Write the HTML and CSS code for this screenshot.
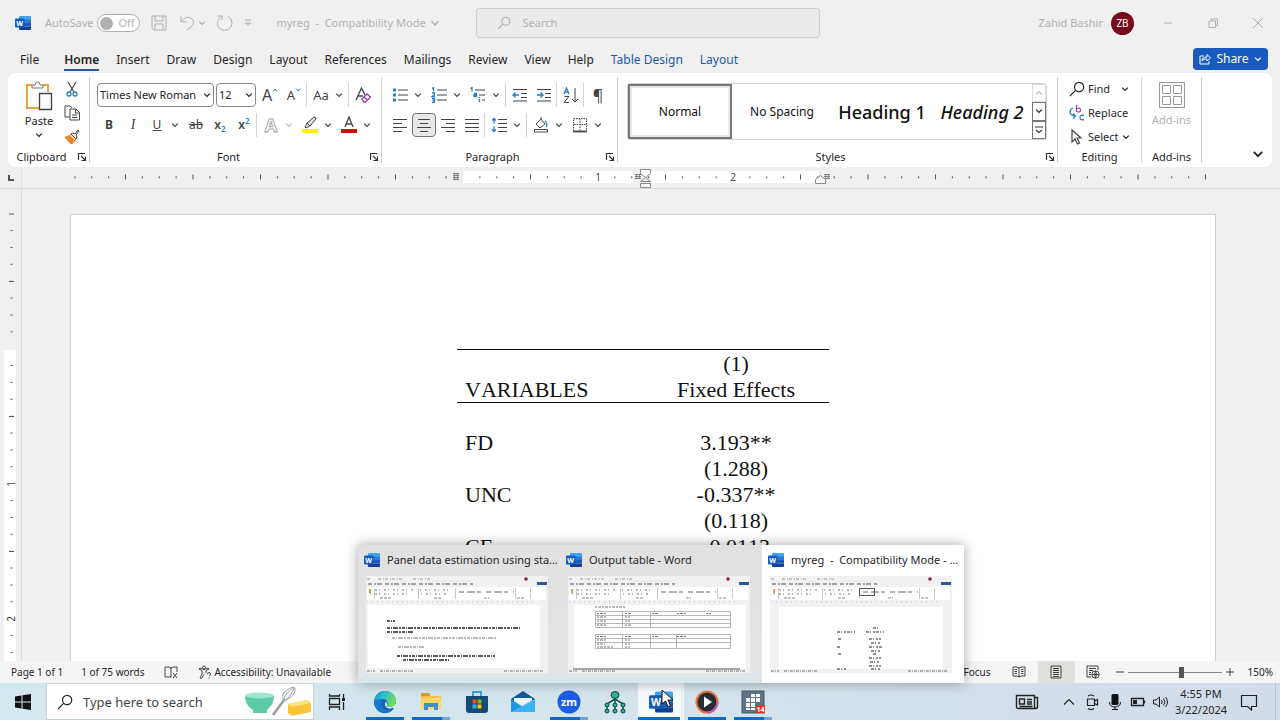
FILE: index.html
```html
<!DOCTYPE html>
<html lang="en">

<head>
  <meta charset="UTF-8" />
  <meta name="viewport" content="width=device-width, initial-scale=1.0" />
  <title>myreg - Compatibility Mode - Word</title>
  <link rel="stylesheet" href="styles.css">
</head>

<body>

  <!-- Shared icons -->
  <svg class="defs" aria-hidden="true">
    <symbol id="chev" viewBox="0 0 8 8"><path d="M1.2 2.6 4 5.4 6.8 2.6" fill="none" stroke="currentColor" stroke-width="1.3" /></symbol>
    <symbol id="launcher" viewBox="0 0 10 10"><path d="M1.5 8V1.5H8M4 4l4 4M8.5 4.5v4h-4" fill="none" stroke="#333" stroke-width="1.1" /></symbol>
    <symbol id="word" viewBox="0 0 16 16">
      <path d="M5 1h10q1 0 1 1v3H4V2q0-1 1-1z" fill="#41a5ee" />
      <path d="M4 4.500h12V8H4z" fill="#2b7cd3" />
      <path d="M4 8h12v3.500H4z" fill="#185abd" />
      <path d="M4 11.500h12V14q0 1-1 1H5q-1 0-1-1z" fill="#103f91" />
      <rect x="0" y="3.500" width="9.500" height="9" rx="1" fill="#185abd" />
      <text x="4.700" y="10.800" text-anchor="middle" class="word-letter">W</text>
    </symbol>
    <symbol id="magnifier" viewBox="0 0 16 16"><path d="M6.300 9.700 1 15M5.500 6a4.600 4.600 0 1 1 9.200 0 4.600 4.600 0 0 1-9.200 0z" fill="none" stroke="currentColor" stroke-width="1.2" /></symbol>
    <symbol id="thumb-chrome" viewBox="0 0 182 97">
      <rect width="182" height="97" fill="#f1f1f1" />
      <rect x="1" y="11" width="179" height="13" fill="#fff" />
      <path d="M1 3h4M12 3h26M47 3h18" stroke="#999" stroke-dasharray="3 2 1 1" />
      <circle cx="160" cy="3" r="1.800" fill="#8a2740" />
      <rect x="171" y="6" width="10" height="3" fill="#2a5a9d" />
      <path d="M2 8h105" stroke="#555" stroke-dasharray="4 2 2 1 5 3" />
      <path d="M4 14h44M54 14h29M4 18h41M55 18h26" stroke="#777" stroke-dasharray="1 4 2 2" />
      <rect x="3" y="13" width="2" height="4" fill="#e09a45" />
      <path d="M93 16h55" stroke="#666" stroke-dasharray="5 3 8 2 4 5" />
      <path d="M8.500 12v11M52.500 12v11M89.500 12v11M149.500 12v11M164.500 12v11" stroke="#ccc" />
      <path d="M14 22h12M68 22h8M118 22h5M151 22h8" stroke="#888" stroke-dasharray="3 1" />
      <path d="M1 26h170" stroke="#bbb" stroke-dasharray="1 4" />
      <path d="M1 95h8M14 95h34M138 95h40" stroke="#777" stroke-dasharray="3 1 1 1" />
    </symbol>
  </svg>

  <header class="titlebar">
    <div class="title-left">
      <svg class="i16" viewBox="0 0 16 16"><use href="#word" /></svg>
      <label for="autosave">AutoSave</label>
      <span class="toggle"><input type="checkbox" id="autosave"><span>Off</span></span>
      <button class="quick" aria-label="Save"><svg class="i18" viewBox="0 0 18 18"><path d="M2 2h14v14H4l-2-2zM5 2v5h8V2M5 16v-6h8v6" /></svg></button>
      <button class="quick undo" aria-label="Undo"><svg class="i18" viewBox="0 0 18 18"><path d="M3 2v6h6M3 8c3-5 8-6 11-3 3 3 1 6-1 8l-4 3" /></svg><svg class="i8"><use href="#chev" /></svg></button>
      <button class="quick" aria-label="Redo"><svg class="i18" viewBox="0 0 18 18"><path d="M6 2H1.500M6 2v4M5.500 2.500C0 6 0 13 5 15.500c5 2.500 11-1 11-6.500 0-3-1.500-5-4-6.500" /></svg></button>
      <button class="quick" aria-label="Customize"><svg class="i8" viewBox="0 0 8 8"><path d="M1 1h6M1.500 4h5L4 6.500z" /></svg></button>
      <button class="doc-name">myreg &nbsp;- &nbsp;Compatibility Mode <svg class="i10"><use href="#chev" /></svg></button>
    </div>
    <label class="search">
      <svg class="i14"><use href="#magnifier" /></svg>
      <input type="search" placeholder="Search" aria-label="Search">
    </label>
    <div class="title-right">
      <span class="user">Zahid Bashir</span>
      <span class="avatar">ZB</span>
      <button class="win" aria-label="Minimize"><svg class="i12" viewBox="0 0 12 12"><path d="M2 6h8" /></svg></button>
      <button class="win" aria-label="Restore"><svg class="i12" viewBox="0 0 12 12"><path d="M2 4h6.500v6.500H2zM4 4V2h6.500v6.500h-2" /></svg></button>
      <button class="win" aria-label="Close"><svg class="i12" viewBox="0 0 12 12"><path d="M1 1l10 10M11 1 1 11" /></svg></button>
    </div>
  </header>

  <nav class="tabs">
    <a href="#">File</a>
    <a href="#" class="active">Home</a>
    <a href="#">Insert</a>
    <a href="#">Draw</a>
    <a href="#">Design</a>
    <a href="#">Layout</a>
    <a href="#">References</a>
    <a href="#">Mailings</a>
    <a href="#">Review</a>
    <a href="#">View</a>
    <a href="#">Help</a>
    <a href="#" class="context">Table Design</a>
    <a href="#" class="context">Layout</a>
    <button class="share">
      <svg class="i12" viewBox="0 0 12 12"><path d="M5 3H1v8h9V8M3 8c0-3 2-4 5-4V1.500L11.500 5 8 8V6C6 6 4 6 3 8z" /></svg>
      Share
      <svg class="i8"><use href="#chev" /></svg>
    </button>
  </nav>

  <main class="ribbon">
    <section class="group clipboard">
      <div class="group-body">
        <button class="paste">
          <svg width="28" height="30" viewBox="0 0 28 30">
            <path d="M7 4H2v23h13M18 4h5v7" fill="none" stroke="#e8a33d" stroke-width="2" />
            <path d="M7 7V4h3q0-3 2.500-3T15 4h3v3z" fill="#fff" stroke="#777" />
            <path d="M14.500 12.500h12v16h-12z" fill="#fafafa" stroke="#444" stroke-width="1.300" />
          </svg>
          <span>Paste</span>
          <svg class="i8"><use href="#chev" /></svg>
        </button>
        <div class="stack">
          <button class="tool" aria-label="Cut"><svg class="i16" viewBox="0 0 16 16"><path d="M4 1l6 10M12 1 6 11" fill="none" stroke="#444" stroke-width="1.200" /><g fill="none" stroke="#2b7fc3" stroke-width="1.300"><circle cx="5" cy="13" r="2" /><circle cx="11" cy="13" r="2" /></g></svg></button>
          <button class="tool" aria-label="Copy"><svg class="i16" viewBox="0 0 16 16"><path d="M6 12H1V1h5l2 2M6 4h6l3.500 3.500V15H6zM11.500 4v4h4M8 10h5M8 12.500h5" fill="none" stroke="#444" /></svg></button>
          <button class="tool" aria-label="Format Painter"><svg class="i16" viewBox="0 0 16 16"><path d="M1 8c3 0 4-1 6-3l5 5c-2 3-3 4-5 5z" fill="#fbd9a4" stroke="#d9771f" /><path d="M1 9l7 6 3-4-6-5z" fill="#e8862b" /><path d="M7 5l2-1 2 1 3-4 1 1-3 4 1 2-1 2z" fill="#fff" stroke="#444" /></svg></button>
        </div>
      </div>
      <div class="group-label"><span>Clipboard</span><button class="launch" aria-label="Clipboard options"><svg class="i10"><use href="#launcher" /></svg></button></div>
    </section>

    <section class="group font">
      <div class="group-body rows">
        <div class="row">
          <span class="combo combo-name"><select aria-label="Font"><option>Times New Roman</option></select><svg class="i8"><use href="#chev" /></svg></span>
          <span class="combo combo-size"><select aria-label="Font size"><option>12</option></select><svg class="i8"><use href="#chev" /></svg></span>
          <button class="tool big" aria-label="Grow font">A<svg class="i6 blue" viewBox="0 0 6 6"><path d="M1 4.500 3 2l2 2.500" /></svg></button>
          <button class="tool mid" aria-label="Shrink font">A<svg class="i6 blue" viewBox="0 0 6 6"><path d="M1 1.500 3 4l2-2.500" /></svg></button>
          <span class="sep"></span>
          <span class="split"><button class="tool mid">Aa</button><button class="drop" aria-label="Case"><svg class="i8"><use href="#chev" /></svg></button></span>
          <span class="sep"></span>
          <button class="tool" aria-label="Clear formatting"><svg class="i18" viewBox="0 0 18 18"><path d="M2 14 7.500 2 11 9M4 10h5" fill="none" stroke="#444" stroke-width="1.300" /><path d="M8 13l5-5 3.500 3-5 5H10z M10 11l3.500 3" fill="#fff" stroke="#9b3fb5" stroke-width="1.300" /></svg></button>
        </div>
        <div class="row">
          <button class="tool bold">B</button>
          <button class="tool italic">I</button>
          <span class="split"><button class="tool under">U</button><button class="drop" aria-label="Underline style"><svg class="i8"><use href="#chev" /></svg></button></span>
          <button class="tool strike">ab</button>
          <button class="tool semi">x<sub>2</sub></button>
          <button class="tool semi">x<sup>2</sup></button>
          <span class="sep"></span>
          <span class="split off"><button class="tool outline">A</button><button class="drop" aria-label="Text effects"><svg class="i8"><use href="#chev" /></svg></button></span>
          <span class="split"><button class="tool" aria-label="Highlight"><svg class="i18" viewBox="0 0 18 18"><path d="M4 11l2-4 7-6q2 0 2 2l-6 7-4 2z" fill="#ddd" stroke="#444" /><path d="M6 7l3 3" stroke="#444" /><rect x="1" y="13" width="16" height="4" fill="#fff200" /></svg></button><button class="drop" aria-label="Highlight color"><svg class="i8"><use href="#chev" /></svg></button></span>
          <span class="split"><button class="tool" aria-label="Font color"><svg class="i18" viewBox="0 0 18 18"><path d="M5 11 9 1l4 10M6.500 8h5" fill="none" stroke="#444" stroke-width="1.300" /><rect x="1" y="13" width="16" height="4" fill="#d01010" /></svg></button><button class="drop" aria-label="More font colors"><svg class="i8"><use href="#chev" /></svg></button></span>
        </div>
      </div>
      <div class="group-label"><span>Font</span><button class="launch" aria-label="Font options"><svg class="i10"><use href="#launcher" /></svg></button></div>
    </section>

    <section class="group paragraph">
      <div class="group-body rows">
        <div class="row">
          <span class="split"><button class="tool" aria-label="Bullets"><svg class="i16 line" viewBox="0 0 16 16"><path d="M6 3h10M6 8h10M6 13h10" /><path class="fill" d="M1 1.500h3v3H1zM1 6.500h3v3H1zM1 11.500h3v3H1z" /></svg></button><button class="drop" aria-label="Bullet styles"><svg class="i8"><use href="#chev" /></svg></button></span>
          <span class="split"><button class="tool" aria-label="Numbering"><svg class="i16 line" viewBox="0 0 16 16"><path d="M6 3h10M6 8h10M6 13h10" /><path class="blue" d="M1 1.500l1.500-1v4M1 6h2.500v2L1 9.500h3M1 11.500h2.500v4H1M1.500 13.500h2" /></svg></button><button class="drop" aria-label="Number styles"><svg class="i8"><use href="#chev" /></svg></button></span>
          <span class="split"><button class="tool" aria-label="Multilevel list"><svg class="i16 line" viewBox="0 0 16 16"><path d="M5 3h10M9 8h6M12 13h3" /><path class="blue" d="M.5 1.500l1.500-1v4M4 6.500h2.500v3H4V8h2.500M9.500 12v3M9.500 10v1" /></svg></button><button class="drop" aria-label="List styles"><svg class="i8"><use href="#chev" /></svg></button></span>
          <span class="sep"></span>
          <button class="tool" aria-label="Decrease indent"><svg class="i16 line" viewBox="0 0 16 16"><path d="M1 2.500h14M9 6.500h6M9 10.500h6M1 14h14" /><path class="blue" d="M7 8H1M3.500 5.500 1 8l2.500 2.500" /></svg></button>
          <button class="tool" aria-label="Increase indent"><svg class="i16 line" viewBox="0 0 16 16"><path d="M1 2.500h14M9 6.500h6M9 10.500h6M1 14h14" /><path class="blue" d="M1 8h6M4.500 5.500 7 8l-2.500 2.500" /></svg></button>
          <span class="sep"></span>
          <button class="tool" aria-label="Sort"><svg class="i16 line" viewBox="0 0 16 16"><path class="blue" d="M1 7 3.500 1 6 7M2 5h3" /><path d="M1.500 9.500H6l-5 6h5M12 1v14M9 12l3 3 3-3" /></svg></button>
          <span class="sep"></span>
          <button class="tool mark">¶</button>
        </div>
        <div class="row">
          <button class="tool" aria-label="Align left"><svg class="i16 line" viewBox="0 0 16 16"><path d="M1 2.500h14M1 6.500h9M1 10.500h14M1 14.500h9" /></svg></button>
          <button class="tool on" aria-label="Center"><svg class="i16 line" viewBox="0 0 16 16"><path d="M2 2.500h12M4 6.500h8M1 10.500h14M4 14.500h8" /></svg></button>
          <button class="tool" aria-label="Align right"><svg class="i16 line" viewBox="0 0 16 16"><path d="M1 2.500h14M6 6.500h9M1 10.500h14M6 14.500h9" /></svg></button>
          <button class="tool" aria-label="Justify"><svg class="i16 line" viewBox="0 0 16 16"><path d="M1 2.500h14M1 6.500h14M1 10.500h14M1 14.500h14" /></svg></button>
          <span class="sep"></span>
          <span class="split"><button class="tool" aria-label="Line spacing"><svg class="i16 line" viewBox="0 0 16 16"><path d="M7 2.500h9M7 6.500h9M7 10.500h9M7 14.500h9" /><path class="blue" d="M3 1.500v5M1 3.500l2-2 2 2M3 9.500v5M1 12.500l2 2 2-2" /></svg></button><button class="drop" aria-label="Spacing options"><svg class="i8"><use href="#chev" /></svg></button></span>
          <span class="sep"></span>
          <span class="split"><button class="tool" aria-label="Shading"><svg class="i16 line" viewBox="0 0 16 16"><path d="M3 7l5-5 4 5-5 4zM8 2V0" /><path class="blue" d="M12 4q2.500 2 1.500 6" /><path d="M1.500 12.500h13v2.500h-13z" stroke="#999" /></svg></button><button class="drop" aria-label="Shading color"><svg class="i8"><use href="#chev" /></svg></button></span>
          <span class="split"><button class="tool" aria-label="Borders"><svg class="i16 line" viewBox="0 0 16 16"><path d="M1.500 14V1.500h13V14M8 2v12M2 7.500h12" stroke-dasharray="1.500 1" /><path d="M1 14.500h14" stroke-width="1.800" /></svg></button><button class="drop" aria-label="Border styles"><svg class="i8"><use href="#chev" /></svg></button></span>
        </div>
      </div>
      <div class="group-label"><span>Paragraph</span><button class="launch" aria-label="Paragraph options"><svg class="i10"><use href="#launcher" /></svg></button></div>
    </section>

    <section class="group styles">
      <div class="group-body">
        <div class="gallery">
          <button class="style selected">Normal</button>
          <button class="style">No Spacing</button>
          <button class="style h1">Heading 1</button>
          <button class="style h2">Heading 2</button>
          <div class="gallery-nav">
            <button class="up" aria-label="Previous styles"><svg class="i8"><use href="#chev" /></svg></button>
            <button aria-label="Next styles"><svg class="i8"><use href="#chev" /></svg></button>
            <button aria-label="All styles"><svg class="i8" viewBox="0 0 8 8"><path d="M0 1h8M1 4l3 2.500L7 4" fill="none" stroke="#333" stroke-width="1.200" /></svg></button>
          </div>
        </div>
      </div>
      <div class="group-label"><span>Styles</span><button class="launch" aria-label="Styles options"><svg class="i10"><use href="#launcher" /></svg></button></div>
    </section>

    <section class="group editing">
      <div class="group-body">
        <button class="edit"><svg class="i16"><use href="#magnifier" /></svg><span class="find">Find</span><svg class="i8"><use href="#chev" /></svg></button>
        <button class="edit"><svg class="i16" viewBox="0 0 16 16"><path d="M4 3Q1 4 1 7t5 4M4 8.500 6.500 11 4 13.500" fill="none" stroke="#2b7fc3" stroke-width="1.300" /><path d="M7.500 0v7M7.500 4q4-2 4 1t-4 1.500" fill="none" stroke="#9b3fb5" stroke-width="1.200" /><path d="M15 10.500q-4-1-4 2t4 2" fill="none" stroke="#2b7fc3" stroke-width="1.300" /></svg><span>Replace</span></button>
        <button class="edit"><svg class="i16" viewBox="0 0 16 16"><path d="M3 1v12l3-3 2.500 5 2-1L8 9h4z" fill="#fff" stroke="#444" stroke-width="1.200" /></svg><span>Select</span><svg class="i8"><use href="#chev" /></svg></button>
      </div>
      <div class="group-label"><span>Editing</span></div>
    </section>

    <section class="group addins">
      <div class="group-body">
        <button class="addin">
          <svg width="28" height="28" viewBox="0 0 28 28"><path d="M1.500 1.500h25v25h-25zM4.500 4.500h8v8h-8zM15.500 4.500h8v8h-8zM4.500 15.500h8v8h-8zM15.500 15.500h8v8h-8z" fill="none" stroke="#9a9a9a" /></svg>
          <span>Add-ins</span>
        </button>
      </div>
      <div class="group-label"><span>Add-ins</span></div>
    </section>

    <button class="collapse" aria-label="Collapse the ribbon"><svg class="i12"><use href="#chev" /></svg></button>
  </main>

  <div class="hruler">
    <div class="corner"><svg class="i8" viewBox="0 0 8 8"><path d="M2 1v5h5" fill="none" stroke="#555" stroke-width="2" /></svg></div>
    <div class="hruler-track">
      <svg width="1146" height="21" viewBox="70 167 1146 21">
        <defs>
          <pattern id="inch" x="462.500" y="167" width="67.500" height="21" patternUnits="userSpaceOnUse">
            <path d="M.5 7.500v5" stroke="#555" stroke-width="1" />
            <path d="M17.400 9.200v2M34.200 9.200v2M51.100 9.200v2" stroke="#555" stroke-width="1" />
          </pattern>
        </defs>
        <rect x="463" y="171" width="170" height="12" fill="#fff" />
        <rect x="651" y="171" width="168" height="12" fill="#fff" />
        <rect x="74" y="167" width="1133" height="21" fill="url(#inch)" />
        <rect x="455" y="170" width="16" height="13" fill="#f0f0f0" />
        <rect x="463" y="171" width="8" height="12" fill="#fff" />
        <rect x="592" y="171" width="12" height="12" fill="#fff" />
        <rect x="727" y="171" width="12" height="12" fill="#fff" />
        <text x="598" y="181" class="tick-label">1</text>
        <text x="733" y="181" class="tick-label">2</text>
        <path d="M453 173.500h6M453 175.500h6M453 177.500h6M453 179.500h6M635 174.500h6M635 176.500h6M635 178.500h6M824 174.500h6M824 176.500h6M824 178.500h6" stroke="#777" />
        <path d="M454.500 173v7M457.500 173v7M636.500 174v5M639.500 174v5M825.500 174v5M828.500 174v5" stroke="#888" />
        <path d="M640.500 169.500h10v4l-5 4-5-4zM640.500 181.500l5-4 5 4zM640.500 183.500h10v4h-10z" fill="#fafafa" stroke="#888" />
        <path d="M815.500 183.500v-4l5-4 5 4v4z" fill="#fafafa" stroke="#888" />
      </svg>
    </div>
  </div>

  <div class="workspace">
    <div class="vruler">
      <svg width="22" height="472" viewBox="0 189 22 472">
        <rect x="4" y="350" width="12" height="311" fill="#fff" />
        <path d="M11.500 230v435" stroke="#555" stroke-width="2" stroke-dasharray="1 15.875" />
        <path d="M9 214h5M9 281.500h5M9 416.500h5M9 551.500h5" stroke="#555" />
        <rect x="4" y="340" width="13" height="10" fill="#f0f0f0" />
        <rect x="4" y="478" width="12" height="12" fill="#fff" />
        <rect x="4" y="613" width="12" height="12" fill="#fff" />
        <text transform="translate(15 484) rotate(-90)" class="tick-label">1</text>
        <text transform="translate(15 619) rotate(-90)" class="tick-label">2</text>
      </svg>
    </div>
    <div class="canvas">
      <article class="page">
        <table class="reg">
          <thead>
            <tr><th></th><th>(1)</th></tr>
            <tr><th>VARIABLES</th><th>Fixed Effects</th></tr>
          </thead>
          <tbody>
            <tr><td></td><td></td></tr>
            <tr><td>FD</td><td>3.193**</td></tr>
            <tr><td></td><td>(1.288)</td></tr>
            <tr><td>UNC</td><td>-0.337**</td></tr>
            <tr><td></td><td>(0.118)</td></tr>
            <tr><td>CF</td><td>-0.0113</td></tr>
          </tbody>
        </table>
      </article>
    </div>
  </div>

  <footer class="status">
    <span>Page 1 of 1</span>
    <span>1 of 75 words</span>
    <button class="proof" aria-label="Proofing"><svg class="i14 line" viewBox="0 0 14 14"><path d="M7 12H1V2h4q2 0 2 2v8M7 4q0-2 2-2h4v5M9 8l4 5M13 8l-4 5" /></svg></button>
    <button class="access"><svg class="i14 line" viewBox="0 0 14 14"><circle cx="6" cy="2.500" r="1.500" /><path d="M1 4l3 1.500V9L2 13l1.500.5L6 9.500M11 4 8 5.500V8M1 4l1-1 4 1.500L10 3l1 1M9.500 9q0-1.500 1.500-1.500T12.500 9 11 11M11 12.500v1" /></svg>Accessibility: Unavailable</button>
    <div class="status-right">
      <button class="focus">Focus</button>
      <button class="view" aria-label="Read mode"><svg class="i14 line" viewBox="0 0 14 14"><path d="M7 3v9M7 3 5 2H1v9h4l2 1 2-1h4V2H9zM2.500 4.500H5M2.500 6.500H5M2.500 8.500H5M9 4.500h2.500M9 6.500h2.500M9 8.500h2.500" /></svg></button>
      <button class="view on" aria-label="Print layout"><svg class="i14 line" viewBox="0 0 14 14"><path d="M2 1h10v12H2zM4 3.500h6M4 5.500h6M4 7.500h6M4 9.500h6M4 11.500h6" /></svg></button>
      <button class="view" aria-label="Web layout"><svg class="i14 line" viewBox="0 0 14 14"><path d="M12 5V1H1v11h4M3 3.500h7M3 5.500h4M3 7.500h2M3 9.500h2" /><circle cx="9.500" cy="9.500" r="3.700" /><path d="M6 9.500h7M9.500 6q-2 3.500 0 7M9.500 6q2 3.500 0 7" /></svg></button>
      <button class="zoom-step" aria-label="Zoom out"><svg class="i8" viewBox="0 0 8 8"><path d="M0 4h8" /></svg></button>
      <input type="range" min="0" max="100" value="58" aria-label="Zoom">
      <button class="zoom-step" aria-label="Zoom in"><svg class="i8" viewBox="0 0 8 8"><path d="M0 4h8M4 0v8" /></svg></button>
      <span class="zoom-value">150%</span>
    </div>
  </footer>

  <div class="taskbar">
    <button class="task start" aria-label="Start"><svg class="i16" viewBox="0 0 16 16"><path d="M0 2.500 6.500 1.500v6H0zM7.500 1.300 16 0v7.500H7.500zM0 8.500h6.500v6L0 13.500zM7.500 8.500H16V16l-8.500-1.300z" fill="#111" /></svg></button>
    <label class="task-search">
      <svg class="i16"><use href="#magnifier" /></svg>
      <input type="search" placeholder="Type here to search" aria-label="Type here to search">
      <svg class="food" width="70" height="32" viewBox="0 0 70 32">
        <path d="M3 10h29q0 8-7 14v3H11v-3Q3 19 3 10z" fill="#5cc9a7" />
        <ellipse cx="17.500" cy="9.500" rx="14.500" ry="3" fill="#9ae8cf" />
        <path d="M31 29 42 14" stroke="#99a" stroke-width="2.500" />
        <path d="M42 15q-4-7 3-11 6-4 8-2 1 8-11 13zM42 15q0-8 10-13M42 15q6-3 10-12" fill="none" stroke="#9aa0aa" stroke-width="1" />
        <path d="M46 18 65 14l4 3v9l-19 4-4-3z" fill="#f9c63a" />
        <path d="M46 18 65 14l4 3-19 4z" fill="#ffe27a" />
      </svg>
    </label>
    <button class="task" aria-label="Task view"><svg class="i18" viewBox="0 0 18 18"><path d="M1.500 5.500h10v6h-10zM1.500 1v2h10V1M1.500 17v-3h10v3M15.500 1v4M15.500 9v8" fill="none" stroke="#222" stroke-width="1.300" /><rect x="14" y="5" width="3" height="3" fill="#222" /></svg></button>

    <div class="apps">
      <button class="task open" aria-label="Edge"><svg class="i24" viewBox="0 0 24 24">
        <defs>
          <linearGradient id="edge" x1="0" y1="0" x2="1" y2=".4"><stop offset="0" stop-color="#1b8fd6" /><stop offset=".5" stop-color="#30c1cf" /><stop offset="1" stop-color="#6fdc5b" /></linearGradient>
        </defs>
        <circle cx="12" cy="12" r="11" fill="#1565b8" />
        <path d="M1 12C2 4 7 1 12 1c7 0 11 5 11 10 0 4-3 6-6 6-3 0-4-1-3-2s1-6-4-6c-4 0-8 1-9 3z" fill="url(#edge)" />
        <path d="M14 15c-1 1 0 2 3 2 2 0 4-1 5.500-3l1.500 0-1 5-3-1c-4 1.500-9-.5-8-5 .5-2 2-1 2 2z" fill="#d5e7ee" />
        <path d="M8 12c-1 6 4 10 12 7.500C14 26 2 24 1 12c1-3 6-3 9-3-1 1-2 2-2 3z" fill="#1c78cd" />
      </svg></button>
      <button class="task open multi" aria-label="File Explorer"><svg class="i24" viewBox="0 0 24 24"><path d="M2 3h8l2 3h10v13H2z" fill="#f6c344" /><path d="M2 3h8l1 3H2z" fill="#d99a1e" /><path d="M2 8h20v11H2z" fill="#ffd566" /><path d="M5 20v-7h14v7h-4v-3H9v3z" fill="#3f8fd0" /></svg></button>
      <button class="task" aria-label="Microsoft Store"><svg class="i24" viewBox="0 0 24 24"><path d="M8 6V2h8v4" fill="none" stroke="#35a5dd" stroke-width="2" /><path d="M1 6h22v14q0 3-3 3H4q-3 0-3-3z" fill="#164a77" /><path d="M7.500 9.500h4v4h-4z" fill="#f25022" /><path d="M12.500 9.500h4v4h-4z" fill="#7fba00" /><path d="M7.500 14.500h4v4h-4z" fill="#33a9e8" /><path d="M12.500 14.500h4v4h-4z" fill="#ffb900" /></svg></button>
      <button class="task" aria-label="Mail"><svg class="i24" viewBox="0 0 24 24"><path d="M0 9 12 1l12 8v13H0z" fill="#0f5a9c" /><path d="M3 8h18v9H3z" fill="#eef6fb" /><path d="M0 9l12 8 12-8v13H0z" fill="#1f95dd" /><path d="M0 22 24 9v13z" fill="#3ab5f2" /></svg></button>
      <button class="task open multi" aria-label="Zoom"><svg class="i24" viewBox="0 0 24 24"><circle cx="12" cy="12" r="11.500" fill="#1b5fe0" /><text x="12" y="16" text-anchor="middle" class="zm">zm</text></svg></button>
      <button class="task" aria-label="Network"><svg class="i24" viewBox="0 0 24 24"><path d="M12 6v17M12 9 4 14v9M12 9l8 5v9" fill="none" stroke="#155" stroke-width="1.500" /><g fill="#27b58e" stroke="#144" stroke-width="1"><ellipse cx="12" cy="5" rx="4" ry="3.500" /><circle cx="4" cy="15" r="2" /><circle cx="12" cy="15" r="2" /><circle cx="20" cy="15" r="2" /><circle cx="4" cy="21" r="2" /><circle cx="12" cy="21" r="2" /><circle cx="20" cy="21" r="2" /></g></svg></button>
      <div class="word-app">
        <button class="task open current" aria-label="Word"><svg class="i24"><use href="#word" /></svg></button>
        <div class="previews">
          <a href="#" class="preview">
            <span class="preview-title"><svg class="i16"><use href="#word" /></svg><span>Panel data estimation using stata - Word</span></span>
            <svg class="thumb" viewBox="0 0 182 97">
              <use href="#thumb-chrome" />
              <rect x="2" y="29" width="172" height="63" fill="#fff" />
              <g stroke="#222" stroke-width="1.600" stroke-dasharray="3 1 1 1 5 1 2 1">
                <path d="M21 45h8M21 52h133M21 56h27M31 80h98M37 84h46" />
                <path d="M26 62h105M32 71h26" stroke="#777" stroke-width="1" />
              </g>
            </svg>
          </a>
          <a href="#" class="preview">
            <span class="preview-title"><svg class="i16"><use href="#word" /></svg><span>Output table - Word</span></span>
            <svg class="thumb" viewBox="0 0 182 97">
              <use href="#thumb-chrome" />
              <rect x="6" y="29" width="172" height="64" fill="#fff" />
              <path d="M27 31h31M29 37.500h10M57 37.500h6M84 37.500h6M109 37.500h10M138 37.500h5M29 41h9M57 41h5M29 45h10M57 45h5M29 49h9M57 49h6M29 60.500h10M57 60.500h6M84 60.500h6M109 60.500h10M29 64h9M57 64h5M29 68h8M57 68h5M29 71h16M57 71h5" stroke="#777" stroke-dasharray="2 1 3 1" />
              <path d="M27.500 35.500h135v16h-135zM27.500 39.500h135M27.500 43.500h135M27.500 47.500h135M27.500 58.500h135v14h-135zM27.500 62.500h135M27.500 66.500h135M54.500 35.500v16M82.500 35.500v16M54.500 58.500v14M82.500 58.500v14M108.500 58.500v14" fill="none" stroke="#999" stroke-width=".7" />
              <path d="M5 93h167" stroke="#555" stroke-width="1.200" />
            </svg>
          </a>
          <a href="#" class="preview hover">
            <span class="preview-title"><svg class="i16"><use href="#word" /></svg><span>myreg &nbsp;- &nbsp;Compatibility Mode - Word</span></span>
            <svg class="thumb" viewBox="0 0 182 97">
              <use href="#thumb-chrome" />
              <rect x="89.500" y="12.500" width="15" height="7" fill="none" stroke="#555" />
              <rect x="9" y="31" width="164" height="62" fill="#fff" />
              <path d="M67 56h18M68 63h3M67 71h4M68 78h3M67 93h10M96 56h18M103 52h5M99 63h12M101 67h9M99 71h13M101 75h9M103 78h3M99 82h12M100 86h9M99 90h12M101 93h10" stroke="#222" stroke-dasharray="3 1 1 2 2 1" />
            </svg>
          </a>
        </div>
        <svg class="pointer" width="13" height="19" viewBox="0 0 13 19"><path d="M1 1v14l3.500-3 2.500 6 2.500-1L7 11h5z" fill="#fff" stroke="#111" /></svg>
      </div>
      <button class="task open" aria-label="Media Player"><svg class="i24" viewBox="0 0 24 24"><circle cx="12" cy="12" r="10.500" fill="#2a2a30" stroke="#e0773f" stroke-width="2" /><path d="M12 22.500A10.500 10.500 0 0 0 22.500 12" fill="none" stroke="#b45cc4" stroke-width="2" /><path d="M9 6.500 17 12l-8 5.500z" fill="#fff" /></svg></button>
      <button class="task open multi" aria-label="Calendar"><svg class="i24" viewBox="0 0 24 24"><rect x="1" y="1" width="22" height="22" fill="#5d7486" stroke="#44586a" /><path d="M5 8h4v4H5zM10 8h4v4h-4zM15 8h4v4h-4zM10 4h4v3h-4zM15 4h4v3h-4zM5 13h4v4H5zM10 13h4v4h-4zM5 18h4v2H5zM10 18h4v2h-4z" fill="#fff" /><rect x="15" y="15" width="9" height="8" fill="#e2322c" /><text x="19.500" y="22" text-anchor="middle" class="badge">14</text></svg></button>
    </div>

    <div class="tray">
      <button class="news" aria-label="News"><svg class="i24" viewBox="0 0 24 24"><path d="M1.500 5.500h18v13h-16q-2 0-2-2zM19.500 7.500h3v9q0 2-2 2h-2M4.500 9h5v5h-5zM12 9.500h5M12 12h5M4.500 16.500h13M12 14h5" fill="none" stroke="#222" stroke-width="1.400" /></svg></button>
      <button aria-label="Hidden icons"><svg class="i16" viewBox="0 0 16 16"><path d="M3 10.500 8 5.500l5 5" fill="none" stroke="#222" stroke-width="1.200" /></svg></button>
      <button aria-label="Meet now"><svg class="i16" viewBox="0 0 16 16"><path d="M3.500 5h7v6.500h-7zM10.500 7l3-1.500v5.500l-3-1.500M4 2q3-2 6 0M4 14.500q3 2 6 0" fill="none" stroke="#222" stroke-width="1.200" /></svg></button>
      <button aria-label="Microphone"><svg class="i16" viewBox="0 0 16 16"><rect x="4.500" y="0" width="7" height="11" rx="1.500" fill="#111" /><path d="M2.500 8q0 5 5.500 5t5.500-5M8 13v2M5 15.500h6" fill="none" stroke="#111" /></svg></button>
      <button aria-label="Battery"><svg class="i16" viewBox="0 0 16 16"><path d="M1.500 4.500h12v7h-12zM14.500 6.500v3" fill="none" stroke="#222" stroke-width="1.300" /><path d="M3 6h4v4H3z" fill="#222" /></svg></button>
      <button aria-label="Volume"><svg class="i16" viewBox="0 0 16 16"><path d="M.5 6v4h2.500l3.500 3V3L3 6zM8.500 6q1.500 2 0 4M10.500 4.500q3 3.500 0 7M12.500 3q4 5 0 10" fill="none" stroke="#222" /></svg></button>
      <div class="clock"><span>4:55 PM</span><span>3/22/2024</span></div>
      <button class="notify" aria-label="Notifications"><svg class="i18" viewBox="0 0 18 18"><path d="M1.500 2.500h15v11h-5v3.500l-4-3.500h-6z" fill="none" stroke="#222" stroke-width="1.200" /></svg></button>
    </div>
  </div>

</body>

</html>
```
FILE: styles.css
```css
* {
  box-sizing: border-box;
}

body {
  margin: 0;
  height: 100vh;
  display: flex;
  flex-direction: column;
  overflow: hidden;
  background-color: #f0f0f0;
  color: #262626;
  font-family: "Noto Sans", sans-serif;
  font-size: 12px;
  line-height: 16px;
}

button,
input,
select {
  font: inherit;
  color: inherit;
  background: none;
  border: none;
  margin: 0;
  padding: 0;
}

button {
  display: flex;
  align-items: center;
  justify-content: center;
  white-space: nowrap;
}

a {
  color: inherit;
  text-decoration: none;
}

svg {
  display: block;
  flex: none;
}

.defs {
  display: none;
}

.i6 { width: 6px; height: 6px; }
.i8 { width: 8px; height: 8px; }
.i10 { width: 10px; height: 10px; }
.i12 { width: 12px; height: 12px; }
.i14 { width: 14px; height: 14px; }
.i16 { width: 16px; height: 16px; }
.i18 { width: 18px; height: 18px; }
.i24 { width: 24px; height: 24px; }

.word-letter {
  font-size: 7px;
  font-weight: bold;
  fill: #fff;
}

/* Title bar */
.titlebar {
  height: 46px;
  flex: none;
  display: grid;
  grid-template-columns: 1fr 344px 1fr;
  align-items: center;
  padding-left: 15px;
  color: #b0b0b0;
}

.titlebar button path {
  fill: none;
  stroke: currentColor;
}

.title-left,
.title-right {
  display: flex;
  align-items: center;
  white-space: nowrap;
  font-size: 11px;
}

.title-left label {
  margin-left: 14px;
}

.toggle {
  display: flex;
  align-items: center;
  gap: 5px;
  width: 43px;
  height: 18px;
  margin: 0 10px 0 4px;
  padding-left: 2px;
  border: 1px solid #b0b0b0;
  border-radius: 9px;
  background-color: #fff;
}

.toggle input {
  appearance: none;
  width: 13px;
  height: 13px;
  border-radius: 50%;
  background-color: #b0b0b0;
}

.quick {
  margin-right: 10px;
}

.undo {
  gap: 2px;
}

.doc-name {
  margin-left: 14px;
  gap: 4px;
}

.search {
  display: flex;
  align-items: center;
  gap: 12px;
  height: 30px;
  padding: 0 20px;
  border: 1px solid #d0d0d0;
  border-radius: 3px;
  background-color: #ebebeb;
}

.search input {
  flex: 1;
  min-width: 0;
  font-size: 11px;
}

.search input::placeholder {
  color: #b0b0b0;
  opacity: 1;
}

.title-right {
  justify-content: flex-end;
}

.avatar {
  width: 23px;
  height: 23px;
  margin: 0 11px 0 8px;
  border-radius: 50%;
  background-color: #750b1c;
  color: #fff;
  font-size: 10px;
  line-height: 23px;
  text-align: center;
}

.win {
  width: 45px;
  height: 30px;
}

/* Tabs */
.tabs {
  display: flex;
  align-items: flex-start;
  gap: 17px;
  height: 27px;
  flex: none;
  padding: 2px 12px 0 20px;
  white-space: nowrap;
}

.tabs a {
  padding: 4px 0 1px;
}

.tabs a:first-child {
  margin-right: 8px;
}

.tabs .active {
  font-weight: 600;
  border-bottom: 2px solid #2b579a;
}

.tabs .context {
  color: #2058a8;
}

.share {
  width: 75px;
  height: 22px;
  margin-left: auto;
  gap: 5px;
  border-radius: 4px;
  background-color: #185abd;
  color: #fff;
}

.share > svg > path {
  fill: none;
  stroke: #fff;
}

/* Ribbon */
.ribbon {
  display: flex;
  height: 94px;
  flex: none;
  margin: 0 8px;
  padding: 4px 0;
  border-radius: 8px;
  background-color: #fff;
}

.group {
  display: flex;
  flex-direction: column;
  flex: none;
  border-right: 1px solid #d4d4d4;
}

.group-body {
  display: flex;
  flex: 1;
}

.group-label {
  display: flex;
  align-items: center;
  height: 13px;
  font-size: 11px;
}

.group-label span {
  flex: 1;
  text-align: center;
}

.launch {
  width: 14px;
}

.clipboard { width: 82px; }
.font { width: 292px; }
.paragraph { width: 236px; }
.styles { width: 440px; }
.editing { width: 84px; }
.addins { width: 60px; }

.paste {
  flex-direction: column;
  justify-content: flex-start;
  width: 54px;
  padding: 4px 0 0 8px;
  gap: 2px;
  font-size: 11px;
}

.stack .tool {
  width: 20px;
}

.rows {
  flex-direction: column;
  gap: 6px;
  padding: 6px 0 0 6px;
}

.font .rows {
  padding-left: 7px;
}

.row {
  display: flex;
  height: 24px;
}

.tool {
  width: 24px;
  height: 24px;
  color: #444;
}

.tool.on {
  border: 1px solid #777;
  border-radius: 4px;
  background-color: #e8e8e8;
}

.split {
  display: flex;
  margin-right: 3px;
}

.drop {
  width: 12px;
  color: #444;
}

.off .drop {
  color: #bbb;
}

.sep {
  width: 3px;
  border-left: 1px solid #d4d4d4;
}

.combo {
  position: relative;
  border: 1px solid #888;
  border-radius: 4px;
  margin-right: 2px;
}

.combo-name { width: 117px; }
.combo-size { width: 40px; }

.combo select {
  appearance: none;
  width: 100%;
  height: 100%;
  padding-left: 2px;
  font-size: 11px;
}

.combo svg {
  position: absolute;
  right: 2px;
  top: 7px;
}

.big { font-size: 16px; }
.mid { font-size: 13px; }
.bold { font-weight: bold; }
.under { text-decoration: underline; }
.strike { text-decoration: line-through; }

.semi {
  display: block;
  font-weight: 600;
}

.tool.italic {
  font-family: "Liberation Serif", serif;
  font-size: 14px;
  font-style: italic;
}

.tool.outline {
  color: #fff;
  font-size: 18px;
  font-weight: bold;
  -webkit-text-stroke: 1px #aaa;
}

.mark {
  font-size: 16px;
}

.big svg,
.mid svg {
  align-self: flex-start;
  margin-top: 4px;
}

sub,
sup {
  font-size: 8px;
  line-height: 8px;
  color: #2b7fc3;
}

.blue path,
.line .blue {
  fill: none;
  stroke: #2b7fc3;
}

.line path,
.line circle {
  fill: none;
  stroke: #444;
}

.line path.blue {
  stroke: #2b7fc3;
  stroke-width: 1.3;
}

.line path.fill {
  fill: #2b7fc3;
  stroke: none;
}

.gallery {
  display: flex;
  width: 420px;
  height: 57px;
  margin: 6px 0 0 9px;
  border: 1px solid #d0d0d0;
  border-radius: 4px;
}

.style {
  flex: 1 1 0;
  min-width: 0;
  color: #111;
}

.style.selected {
  border: 2px solid #777;
  outline: 2px solid #e8e8e8;
  outline-offset: -4px;
}

.h1,
.h2 {
  font-size: 18px;
  font-weight: 500;
}

.h2 {
  font-style: italic;
}

.gallery-nav {
  display: flex;
  flex-direction: column;
  width: 14px;
}

.gallery-nav button {
  flex: 1;
  border: 1px solid #777;
}

.gallery-nav .up {
  border-color: #ddd;
  color: #bbb;
}

.up svg {
  transform: rotate(180deg);
}

.editing .group-body {
  flex-direction: column;
}

.edit {
  justify-content: flex-start;
  height: 24px;
  padding-left: 11px;
  gap: 3px;
  font-size: 11px;
}

.find {
  width: 30px;
  text-align: left;
}

.addin {
  flex: 1;
  flex-direction: column;
  justify-content: flex-start;
  padding-top: 4px;
  gap: 3px;
  color: #b0b0b0;
  font-size: 11px;
}

.collapse {
  margin: auto 8px 3px auto;
}

/* Rulers and document */
.hruler {
  display: flex;
  flex: none;
  height: 22px;
  padding-right: 16px;
  border-bottom: 1px solid #d8d8d8;
}

.corner {
  display: flex;
  justify-content: center;
  align-items: center;
  width: 22px;
  border-right: 1px solid #e0e0e0;
}

.hruler-track {
  display: flex;
  flex: 1;
  justify-content: center;
}

.tick-label {
  font-size: 10px;
  text-anchor: middle;
  fill: #444;
}

.workspace {
  display: flex;
  flex: 1;
  min-height: 0;
  overflow: hidden;
  padding-right: 16px;
}

.vruler {
  width: 22px;
  border-right: 1px solid #dcdcdc;
  overflow: hidden;
}

.canvas {
  flex: 1;
  padding-top: 25px;
}

.page {
  width: 1146px;
  height: 1485px;
  margin: 0 auto;
  padding-top: 134px;
  border: 1px solid #d0d0d0;
  background-color: #fff;
}

.reg {
  width: 372px;
  margin: 0 auto;
  border-collapse: collapse;
  table-layout: fixed;
  color: #111;
  font-family: "Liberation Serif", serif;
  font-size: 22px;
  font-kerning: none;
  line-height: 24px;
}

.reg thead {
  border-top: 1px solid #111;
  border-bottom: 1px solid #111;
}

.reg th,
.reg td {
  height: 26px;
  padding: 2px 0 0;
  font-weight: normal;
  text-align: center;
}

.reg th:first-child,
.reg td:first-child {
  padding-left: 8px;
  text-align: left;
}

/* Status bar */
.status {
  display: flex;
  align-items: center;
  flex: none;
  height: 22px;
  padding: 0 7px 0 11px;
  gap: 18px;
  background-color: #f5f5f5;
  font-size: 10px;
  white-space: nowrap;
}

.proof {
  padding: 0 2px;
}

.access {
  gap: 2px;
}

.status-right {
  display: flex;
  align-items: center;
  margin-left: auto;
  height: 100%;
}

.focus {
  margin-right: 10px;
}

.view {
  width: 37px;
  height: 100%;
}

.view.on {
  background-color: #e0e0dc;
}

.zoom-step {
  margin: 0 4px;
}

.zoom-step path {
  fill: none;
  stroke: #444;
}

.status input {
  appearance: none;
  width: 94px;
  height: 12px;
  background: linear-gradient(#888, #888) center / 100% 1px no-repeat;
}

.status input::-webkit-slider-thumb {
  appearance: none;
  width: 5px;
  height: 11px;
  background-color: #555;
}

.zoom-value {
  margin-left: 10px;
}

/* Taskbar */
.taskbar {
  display: flex;
  flex: none;
  height: 37px;
  background: linear-gradient(90deg, #d2e9ef, #d4e4ec 50%, #d3dbe9);
}

.task {
  position: relative;
  width: 46px;
  height: 37px;
}

.open::after {
  content: "";
  position: absolute;
  left: 4px;
  right: 4px;
  bottom: 0;
  height: 3px;
  background-color: #0a6cc4;
}

.multi::after {
  background: linear-gradient(90deg, #0a6cc4 80%, #6ea6d8 80%);
}

.current {
  background: linear-gradient(90deg, #f6fafc 43px, #dbe6ec 43px, #f1f6f9 44px);
}

.current::after {
  left: 0;
}

.task-search {
  display: flex;
  align-items: center;
  width: 268px;
  padding: 0 1px 0 10px;
  border: 1px solid #c5d3d8;
  background-color: #fff;
}

.task-search input {
  flex: 1;
  min-width: 0;
  margin-left: 10px;
  font-size: 13px;
}

.task-search input::placeholder {
  color: #444;
  opacity: 1;
}

.apps {
  display: flex;
  margin-left: 2px;
}

.zm {
  font-size: 11px;
  font-weight: bold;
  fill: #fff;
}

.badge {
  font-size: 7px;
  font-weight: bold;
  fill: #fff;
}

.word-app {
  position: relative;
}

.previews {
  position: absolute;
  bottom: 100%;
  left: 50%;
  display: flex;
  width: 606px;
  transform: translateX(-50%);
  background: linear-gradient(#e1e1e1, #e4e4e4 90%, #d8e6ec);
  box-shadow: 0 0 12px rgba(0, 0, 0, 0.35);
}

.preview {
  flex: 1;
  min-width: 0;
  height: 138px;
  padding: 7px 0 0 6px;
}

.preview.hover {
  background-color: #fff;
}

.preview-title {
  display: flex;
  gap: 7px;
  height: 24px;
  font-size: 11px;
}

.preview-title span {
  min-width: 0;
  overflow: hidden;
  text-overflow: ellipsis;
  white-space: nowrap;
}

.preview.hover .preview-title {
  padding-right: 4px;
}

.thumb {
  width: 182px;
  height: 97px;
  margin-left: 2px;
}

.pointer {
  position: absolute;
  left: 23px;
  top: 6px;
}

.tray {
  display: flex;
  align-items: center;
  margin-left: auto;
  padding-right: 4px;
}

.tray button {
  width: 23px;
  height: 100%;
}

.tray .news {
  width: 60px;
}

.clock {
  display: flex;
  flex-direction: column;
  width: 58px;
  text-align: center;
  font-size: 11px;
}

.tray .notify {
  width: 46px;
  padding-right: 8px;
  border-right: 1px solid #b8c2cc;
}
```
